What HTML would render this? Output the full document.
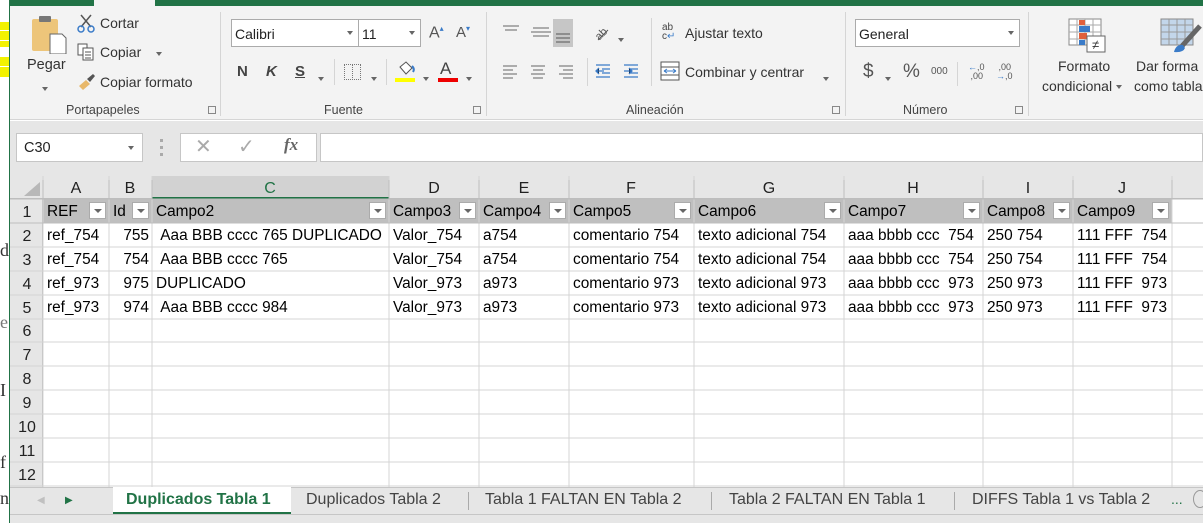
<!DOCTYPE html>
<html><head><meta charset="utf-8"><style>
*{margin:0;padding:0;box-sizing:border-box}
body{width:1203px;height:523px;overflow:hidden;position:relative;background:#fff;font-family:"Liberation Sans",sans-serif;color:#262626}
.a{position:absolute;white-space:nowrap}
.rb{font-size:14px;color:#333}
.gl{font-size:12.5px;color:#444}
.c{position:absolute;font-size:15.4px;color:#000;white-space:nowrap;line-height:24px;padding-top:1px}
.fb{position:absolute;width:17px;height:17px;background:#fff;border:1px solid #ababab;top:202px}
.fb:after{content:"";position:absolute;left:4px;top:6px;border-left:4px solid transparent;border-right:4px solid transparent;border-top:4px solid #666}
.dd{display:inline-block;border-left:3.5px solid transparent;border-right:3.5px solid transparent;border-top:4px solid #666;vertical-align:middle}
</style></head><body>
<div class="a" style="left:0;top:0;width:9px;height:523px;background:#fff"></div>
<div class="a" style="left:0;top:22px;width:9px;height:55px;background:#f2f200"></div>
<div class="a" style="left:0;top:30px;width:9px;height:1px;background:#fff"></div>
<div class="a" style="left:0;top:40px;width:9px;height:1px;background:#fff"></div>
<div class="a" style="left:0;top:47px;width:9px;height:10px;background:#fff"></div>
<div class="a" style="left:0;top:66px;width:9px;height:1px;background:#fff"></div>
<div class="a" style="left:0;top:240px;font:18px 'Liberation Serif',serif;color:#333">d</div>
<div class="a" style="left:0;top:312px;font:18px 'Liberation Serif',serif;color:#777">e</div>
<div class="a" style="left:0;top:380px;font:18px 'Liberation Serif',serif;color:#333">I</div>
<div class="a" style="left:0;top:452px;font:18px 'Liberation Serif',serif;color:#333">f</div>
<div class="a" style="left:0;top:488px;font:18px 'Liberation Serif',serif;color:#333">n</div>
<div class="a" style="left:9px;top:0;width:1px;height:523px;background:#217346"></div>
<div class="a" style="left:10px;top:0;width:1193px;height:6px;background:#217346"></div>
<div class="a" style="left:94px;top:0;width:61px;height:6px;background:#f3f3f3"></div>
<div class="a" style="left:10px;top:6px;width:1193px;height:114px;background:#f3f3f3;border-bottom:1px solid #d5d5d5"></div>
<svg class="a" style="left:30px;top:14px" width="38" height="40"><rect x="2" y="5" width="26" height="32" rx="2" fill="#edc57a"/><rect x="9" y="2" width="12" height="6" rx="1" fill="#777"/><path d="M20 20h12l4 4v16H20z" fill="#fff" stroke="#666"/></svg>
<div class="a rb" style="left:27px;top:57px;font-size:14.5px">Pegar</div>
<div class="a" style="left:42px;top:80px"><span class="dd"></span></div>
<svg class="a" style="left:77px;top:13px" width="18" height="20"><path d="M4 2l10 12M14 2L4 14" stroke="#555" stroke-width="1.5"/><circle cx="4" cy="16" r="3" fill="none" stroke="#3a7bc8" stroke-width="1.5"/><circle cx="14" cy="16" r="3" fill="none" stroke="#3a7bc8" stroke-width="1.5"/></svg>
<div class="a rb" style="left:100px;top:15px">Cortar</div>
<svg class="a" style="left:77px;top:43px" width="18" height="18"><rect x="1" y="1" width="9" height="11" fill="#fff" stroke="#555"/><rect x="6" y="5" width="10" height="12" fill="#fff" stroke="#555"/><path d="M8 9h6M8 12h6M8 15h6" stroke="#555"/></svg>
<div class="a rb" style="left:100px;top:44px">Copiar</div>
<div class="a" style="left:156px;top:45px"><span class="dd"></span></div>
<svg class="a" style="left:77px;top:72px" width="20" height="18"><path d="M2 14l7-6 4 4-7 6z" fill="#e8b86a"/><path d="M10 7l6-5 2 2-5 6z" fill="#555"/></svg>
<div class="a rb" style="left:100px;top:74px">Copiar formato</div>
<div class="a gl" style="left:66px;top:103px">Portapapeles</div>
<div class="a" style="left:208px;top:106px;width:8px;height:8px;border:1px solid #888"></div>
<div class="a" style="left:220px;top:12px;width:1px;height:104px;background:#d5d5d5"></div>
<div class="a" style="left:231px;top:19px;width:128px;height:28px;background:#fff;border:1px solid #ababab;font-size:14px;padding:6px 3px;color:#222">Calibri<span class="dd" style="position:absolute;right:5px;top:11px"></span></div>
<div class="a" style="left:358px;top:19px;width:63px;height:28px;background:#fff;border:1px solid #ababab;font-size:14px;padding:6px 3px;color:#222">11<span class="dd" style="position:absolute;right:5px;top:11px"></span></div>
<div class="a" style="left:429px;top:24px;font-size:16px;color:#555">A<sup style="font-size:8px;color:#3a7bc8">▴</sup></div>
<div class="a" style="left:456px;top:24px;font-size:15px;color:#555">A<sup style="font-size:8px;color:#3a7bc8">▾</sup></div>
<div class="a" style="left:237px;top:63px;font-size:15px;font-weight:bold;color:#444">N</div>
<div class="a" style="left:266px;top:63px;font-size:15px;font-weight:bold;font-style:italic;color:#444">K</div>
<div class="a" style="left:295px;top:63px;font-size:15px;font-weight:bold;text-decoration:underline;color:#444">S</div>
<div class="a" style="left:318px;top:70px"><span class="dd"></span></div>
<div class="a" style="left:334px;top:59px;width:1px;height:26px;background:#d5d5d5"></div>
<div class="a" style="left:344px;top:64px;width:17px;height:16px;border:1px dotted #777"></div>
<div class="a" style="left:352px;top:64px;width:1px;height:16px;border-left:1px dotted #777"></div>
<div class="a" style="left:371px;top:70px"><span class="dd"></span></div>
<div class="a" style="left:386px;top:59px;width:1px;height:26px;background:#d5d5d5"></div>
<svg class="a" style="left:396px;top:61px" width="20" height="14"><path d="M4 6l6-5 6 6-6 6z" fill="#fff" stroke="#555"/><path d="M16 5q3 3 1 6" stroke="#3a7bc8" fill="none" stroke-width="2"/></svg>
<div class="a" style="left:395px;top:78px;width:20px;height:4px;background:#ffff00"></div>
<div class="a" style="left:423px;top:70px"><span class="dd"></span></div>
<div class="a" style="left:440px;top:59px;font-size:17px;color:#444">A</div>
<div class="a" style="left:438px;top:78px;width:20px;height:4px;background:#e00"></div>
<div class="a" style="left:466px;top:70px"><span class="dd"></span></div>
<div class="a gl" style="left:324px;top:103px">Fuente</div>
<div class="a" style="left:473px;top:106px;width:8px;height:8px;border:1px solid #888"></div>
<div class="a" style="left:486px;top:12px;width:1px;height:104px;background:#d5d5d5"></div>
<svg class="a" style="left:500px;top:18px" width="120" height="32"><path d="M3 8h16M5 12h12M33 10h16M31 14h20M33 18h16" stroke="#666"/><rect x="53" y="1" width="20" height="28" fill="#c6c6c6"/><path d="M56 16h14M56 20h14M56 24h14" stroke="#555"/><text x="94" y="20" font-size="11" fill="#555" font-family="Liberation Sans" transform="rotate(-45 100 15)">ab</text><path d="M98 22l10-10" stroke="#555"/></svg>
<div class="a" style="left:618px;top:31px"><span class="dd"></span></div>
<svg class="a" style="left:500px;top:62px" width="145" height="20"><path d="M3 4h14M3 8h10M3 12h14M3 16h10M31 4h14M33 8h10M31 12h14M33 16h10M59 4h14M63 8h10M59 12h14M63 16h10" stroke="#666"/><path d="M96 3h14M102 7h8M102 11h8M96 15h14M104 9h-8m3-3l-3 3 3 3" stroke="#3a7bc8" stroke-width="1.3"/><path d="M124 3h14M130 7h8M130 11h8M124 15h14M124 9h8m-3-3l3 3-3 3" stroke="#3a7bc8" stroke-width="1.3"/></svg>
<div class="a" style="left:587px;top:58px;width:1px;height:28px;background:#d5d5d5"></div>
<div class="a" style="left:651px;top:18px;width:1px;height:68px;background:#d5d5d5"></div>
<div class="a" style="left:662px;top:23px;font-size:10px;line-height:9px;color:#444">ab<br>c<span style="color:#3a7bc8">↵</span></div>
<div class="a rb" style="left:685px;top:25px">Ajustar texto</div>
<svg class="a" style="left:660px;top:61px" width="20" height="20"><rect x="1" y="1" width="18" height="18" fill="#fff" stroke="#555"/><path d="M1 6h18M1 14h18" stroke="#555"/><path d="M4 10h12M4 10l3-2M4 10l3 2M16 10l-3-2M16 10l-3 2" stroke="#3a7bc8"/></svg>
<div class="a rb" style="left:685px;top:64px">Combinar y centrar</div>
<div class="a" style="left:823px;top:70px"><span class="dd"></span></div>
<div class="a gl" style="left:626px;top:103px">Alineación</div>
<div class="a" style="left:832px;top:106px;width:8px;height:8px;border:1px solid #888"></div>
<div class="a" style="left:845px;top:12px;width:1px;height:104px;background:#d5d5d5"></div>
<div class="a" style="left:855px;top:19px;width:165px;height:28px;background:#fff;border:1px solid #ababab;font-size:14px;padding:6px 3px;color:#222">General<span class="dd" style="position:absolute;right:5px;top:11px"></span></div>
<div class="a" style="left:863px;top:61px;font-size:19px;color:#555">$</div>
<div class="a" style="left:885px;top:70px"><span class="dd"></span></div>
<div class="a" style="left:903px;top:61px;font-size:19px;color:#555">%</div>
<div class="a" style="left:931px;top:66px;font-size:10px;color:#555">000</div>
<div class="a" style="left:957px;top:62px;width:1px;height:24px;background:#d5d5d5"></div>
<div class="a" style="left:968px;top:63px;font-size:9px;line-height:9px;color:#555"><span style="color:#3a7bc8">←</span>,0<br>&nbsp;,00</div>
<div class="a" style="left:996px;top:63px;font-size:9px;line-height:9px;color:#555">&nbsp;,00<br><span style="color:#3a7bc8">→</span>,0</div>
<div class="a gl" style="left:903px;top:103px">Número</div>
<div class="a" style="left:1015px;top:106px;width:8px;height:8px;border:1px solid #888"></div>
<div class="a" style="left:1028px;top:12px;width:1px;height:104px;background:#d5d5d5"></div>
<svg class="a" style="left:1068px;top:18px" width="40" height="36"><rect x="1" y="1" width="32" height="26" fill="#fff" stroke="#888"/><path d="M1 7h32M1 14h32M1 21h32M9 1v26M17 1v26M25 1v26" stroke="#aaa"/><rect x="11" y="2" width="6" height="5" fill="#e0603c"/><rect x="11" y="8" width="11" height="6" fill="#3a7bc8"/><rect x="11" y="15" width="8" height="6" fill="#e0603c"/><rect x="11" y="22" width="6" height="5" fill="#3a7bc8"/><rect x="19" y="18" width="18" height="16" fill="#fff" stroke="#666"/><text x="24" y="31" font-size="13" fill="#333" font-family="Liberation Sans">≠</text></svg>
<div class="a rb" style="left:1058px;top:58px">Formato</div>
<div class="a rb" style="left:1042px;top:78px">condicional <span class="dd"></span></div>
<svg class="a" style="left:1160px;top:18px" width="43" height="36"><rect x="1" y="1" width="32" height="26" fill="#c3d6ea" stroke="#888"/><path d="M1 7h32M1 14h32M1 21h32M9 1v26M17 1v26M25 1v26" stroke="#999"/><path d="M40 8L22 28" stroke="#666" stroke-width="5"/><path d="M14 34q2-8 9-7l2 3q-2 5-11 4z" fill="#3a7bc8"/></svg>
<div class="a rb" style="left:1136px;top:58px">Dar forma</div>
<div class="a rb" style="left:1134px;top:78px">como tabla</div>
<div class="a" style="left:10px;top:121px;width:1193px;height:55px;background:#e6e6e6"></div>
<div class="a" style="left:16px;top:133px;width:127px;height:29px;background:#fff;border:1px solid #c6c6c6;font-size:14.5px;padding:6px 7px;color:#222">C30<span class="dd" style="position:absolute;right:8px;top:12px"></span></div>
<div class="a" style="left:160px;top:139px;width:3px;height:17px;border-left:3px dotted #aaa"></div>
<div class="a" style="left:180px;top:133px;width:137px;height:29px;background:#fff;border:1px solid #c6c6c6"></div>
<div class="a" style="left:195px;top:134px;font-size:20px;color:#aaa">✕</div>
<div class="a" style="left:238px;top:134px;font-size:20px;color:#aaa">✓</div>
<div class="a" style="left:284px;top:135px;font:italic bold 17px 'Liberation Serif',serif;color:#666">fx</div>
<div class="a" style="left:320px;top:133px;width:883px;height:29px;background:#fff;border:1px solid #c6c6c6"></div>
<div class="a" style="left:10px;top:176px;width:1193px;height:23px;background:#e6e6e6;border-bottom:1px solid #bdbdbd"></div>
<svg class="a" style="left:16px;top:180px" width="26" height="18"><path d="M24 2v14H8z" fill="#b8b8b8"/></svg>
<div class="a" style="left:10px;top:199px;width:33px;height:288px;background:#e6e6e6;border-right:1px solid #bdbdbd"></div>
<div class="a" style="left:152px;top:176px;width:237px;height:23px;background:#d2d2d2;border-bottom:2px solid #217346"></div>
<div class="a" style="left:43px;top:199px;width:1129px;height:24px;background:#bfbfbf"></div>
<svg class="a" style="left:0;top:176px" width="1203" height="311">
<g stroke="#d4d4d4" shape-rendering="crispEdges">
<path d="M43 0v311M109 0v311M152 0v311M389 0v311M479 0v311M569 0v311M694 0v311M844 0v311M983 0v311M1073 0v311M1172 0v311"/>
<path d="M10 47h1193M10 71h1193M10 95h1193M10 119h1193M10 143h1193M10 166h1193M10 190h1193M10 214h1193M10 238h1193M10 262h1193M10 286h1193M10 310h1193"/>
</g>
<g stroke="#bdbdbd" shape-rendering="crispEdges"><path d="M43 4v19M109 4v19M152 4v19M389 4v19M479 4v19M569 4v19M694 4v19M844 4v19M983 4v19M1073 4v19M1172 4v19"/><path d="M10 23h1193M10 47h1193"/></g>
<g font-family="Liberation Sans" font-size="16" fill="#222" text-anchor="middle">
<text x="76" y="17">A</text><text x="130" y="17">B</text><text x="270" y="17" fill="#217346">C</text><text x="434" y="17">D</text><text x="524" y="17">E</text><text x="631" y="17">F</text><text x="769" y="17">G</text><text x="913" y="17">H</text><text x="1028" y="17">I</text><text x="1122" y="17">J</text>
<text x="27" y="41">1</text><text x="27" y="65">2</text><text x="27" y="89">3</text><text x="27" y="113">4</text><text x="27" y="137">5</text><text x="27" y="160">6</text><text x="27" y="184">7</text><text x="27" y="208">8</text><text x="27" y="232">9</text><text x="27" y="256">10</text><text x="27" y="280">11</text><text x="27" y="304">12</text>
</g>
</svg>
<div class="fb" style="left:89px"></div><div class="fb" style="left:132px"></div><div class="fb" style="left:369px"></div><div class="fb" style="left:459px"></div><div class="fb" style="left:549px"></div><div class="fb" style="left:674px"></div><div class="fb" style="left:824px"></div><div class="fb" style="left:963px"></div><div class="fb" style="left:1053px"></div><div class="fb" style="left:1152px"></div>
<div class="c" style="left:47px;top:199px">REF</div><div class="c" style="left:113px;top:199px">Id</div><div class="c" style="left:156px;top:199px">Campo2</div><div class="c" style="left:393px;top:199px">Campo3</div><div class="c" style="left:483px;top:199px">Campo4</div><div class="c" style="left:573px;top:199px">Campo5</div><div class="c" style="left:698px;top:199px">Campo6</div><div class="c" style="left:848px;top:199px">Campo7</div><div class="c" style="left:987px;top:199px">Campo8</div><div class="c" style="left:1077px;top:199px">Campo9</div>
<div class="c" style="left:47px;top:223px">ref_754</div><div class="c" style="left:109px;width:40px;text-align:right;top:223px">755</div><div class="c" style="left:156px;top:223px">&nbsp;Aaa BBB cccc 765 DUPLICADO</div><div class="c" style="left:393px;top:223px">Valor_754</div><div class="c" style="left:483px;top:223px">a754</div><div class="c" style="left:573px;top:223px">comentario 754</div><div class="c" style="left:698px;top:223px">texto adicional 754</div><div class="c" style="left:848px;top:223px">aaa bbbb ccc&nbsp; 754</div><div class="c" style="left:987px;top:223px">250 754</div><div class="c" style="left:1077px;top:223px">111 FFF&nbsp; 754</div>
<div class="c" style="left:47px;top:247px">ref_754</div><div class="c" style="left:109px;width:40px;text-align:right;top:247px">754</div><div class="c" style="left:156px;top:247px">&nbsp;Aaa BBB cccc 765</div><div class="c" style="left:393px;top:247px">Valor_754</div><div class="c" style="left:483px;top:247px">a754</div><div class="c" style="left:573px;top:247px">comentario 754</div><div class="c" style="left:698px;top:247px">texto adicional 754</div><div class="c" style="left:848px;top:247px">aaa bbbb ccc&nbsp; 754</div><div class="c" style="left:987px;top:247px">250 754</div><div class="c" style="left:1077px;top:247px">111 FFF&nbsp; 754</div>
<div class="c" style="left:47px;top:271px">ref_973</div><div class="c" style="left:109px;width:40px;text-align:right;top:271px">975</div><div class="c" style="left:156px;top:271px">DUPLICADO</div><div class="c" style="left:393px;top:271px">Valor_973</div><div class="c" style="left:483px;top:271px">a973</div><div class="c" style="left:573px;top:271px">comentario 973</div><div class="c" style="left:698px;top:271px">texto adicional 973</div><div class="c" style="left:848px;top:271px">aaa bbbb ccc&nbsp; 973</div><div class="c" style="left:987px;top:271px">250 973</div><div class="c" style="left:1077px;top:271px">111 FFF&nbsp; 973</div>
<div class="c" style="left:47px;top:295px">ref_973</div><div class="c" style="left:109px;width:40px;text-align:right;top:295px">974</div><div class="c" style="left:156px;top:295px">&nbsp;Aaa BBB cccc 984</div><div class="c" style="left:393px;top:295px">Valor_973</div><div class="c" style="left:483px;top:295px">a973</div><div class="c" style="left:573px;top:295px">comentario 973</div><div class="c" style="left:698px;top:295px">texto adicional 973</div><div class="c" style="left:848px;top:295px">aaa bbbb ccc&nbsp; 973</div><div class="c" style="left:987px;top:295px">250 973</div><div class="c" style="left:1077px;top:295px">111 FFF&nbsp; 973</div>
<div class="a" style="left:10px;top:487px;width:1193px;height:36px;background:#e6e6e6;border-top:1px solid #c6c6c6"></div>
<div class="a" style="left:10px;top:514px;width:1193px;height:1px;background:#c6c6c6"></div>
<div class="a" style="left:37px;top:495px;font-size:10px;color:#c0c0c0">◀</div>
<div class="a" style="left:65px;top:495px;font-size:10px;color:#217346">▶</div>
<div class="a" style="left:113px;top:487px;width:178px;height:27px;background:#fff;border-bottom:2px solid #217346"></div>
<div class="a" style="left:126px;top:491px;font-size:16px;font-weight:bold;color:#217346">Duplicados Tabla 1</div>
<div class="a" style="left:306px;top:491px;font-size:16px;color:#444">Duplicados Tabla 2</div>
<div class="a" style="left:468px;top:492px;width:1px;height:18px;background:#aaa"></div>
<div class="a" style="left:485px;top:491px;font-size:16px;color:#444">Tabla 1 FALTAN EN Tabla 2</div>
<div class="a" style="left:711px;top:492px;width:1px;height:18px;background:#aaa"></div>
<div class="a" style="left:729px;top:491px;font-size:16px;color:#444">Tabla 2 FALTAN EN Tabla 1</div>
<div class="a" style="left:954px;top:492px;width:1px;height:18px;background:#aaa"></div>
<div class="a" style="left:972px;top:491px;font-size:16px;color:#444">DIFFS Tabla 1 vs Tabla 2</div>
<div class="a" style="left:1171px;top:491px;font-size:14px;color:#217346">...</div>
<div class="a" style="left:1193px;top:490px;width:14px;height:18px;border:1px solid #999;border-radius:50%"></div>
</body></html>
